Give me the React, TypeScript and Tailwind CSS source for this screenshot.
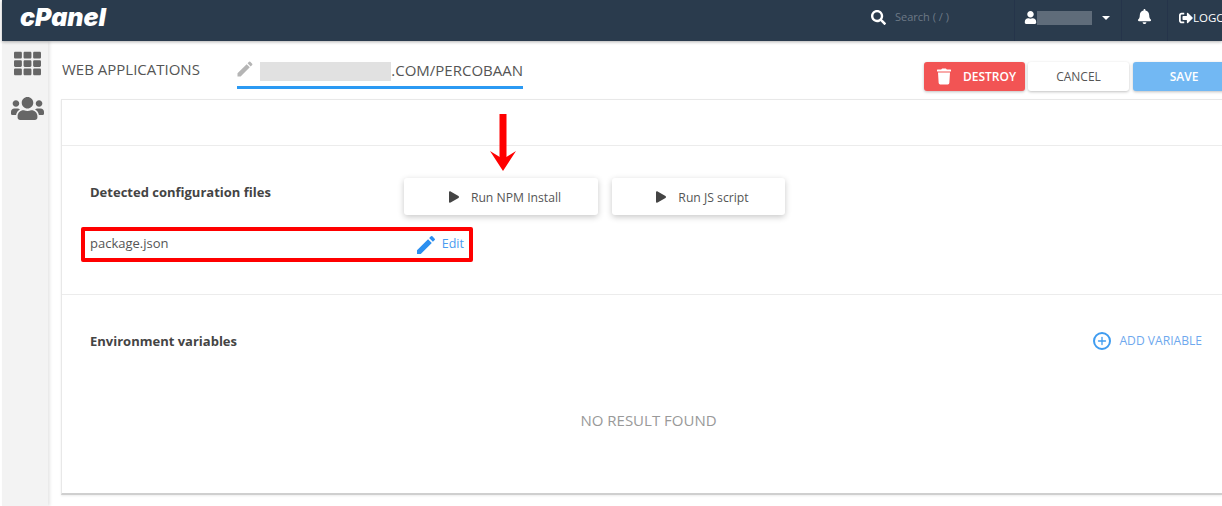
import { Plus } from 'lucide-react';
import { FaBell, FaPlay, FaSearch, FaSignOutAlt, FaTh, FaTrash, FaUser, FaUsers } from 'react-icons/fa';
import { MdEdit } from 'react-icons/md';

function RunButton({ label, width }: { label: string; width: string }) {
  return (
    <button className={`${width} h-[37px] flex items-center justify-center gap-[12px] pl-[8px] bg-white rounded-[3px] shadow-[0_2px_6px_rgba(0,0,0,0.22)] text-[12.2px] text-[#555]`}>
      <FaPlay className="w-[10px] h-[12px] text-[#444]" />
      <span className="pt-[3px]">{label}</span>
    </button>
  );
}

export default function App() {
  return (
    <div className="w-[1222px] h-[506px] overflow-hidden bg-white pl-[2px] font-['Open_Sans',sans-serif] text-[#555]">
      {/* Top bar */}
      <header className="relative z-10 h-[41px] bg-[#2a3b4d] flex items-center shadow-[0_1px_3px_rgba(0,0,0,0.3)]">
        <div className="ml-[18px] w-[90px] pb-[7px] text-[25px] leading-none font-black italic text-white font-['Inter',sans-serif]">cPanel</div>
        <div className="ml-auto w-[151px] flex items-center pl-[8px] pb-[6px]">
          <FaSearch className="w-[15px] h-[15px] text-white" />
          <span className="ml-[9px] text-[11px] text-[#6d7986]">Search ( / )</span>
        </div>
        <div className="w-[108px] h-full flex items-center border-x border-[#25344a] pl-[9px] pb-[6px]">
          <FaUser className="w-[13px] h-[13px] text-white" />
          <div className="w-[55px] h-[14px] bg-[#5f6c7a]" />
          <div className="ml-[10px] w-0 h-0 border-x-[4px] border-x-transparent border-t-[4px] border-t-white" />
        </div>
        <div className="w-[46px] h-full flex items-center justify-center border-r border-[#25344a] pb-[8px]">
          <FaBell className="w-[15px] h-[15px] text-white" />
        </div>
        <div className="w-[54px] flex items-center pl-[11px] pb-[6px] overflow-hidden text-[11.5px] text-white">
          <FaSignOutAlt className="w-[14px] h-[14px] shrink-0" />
          <span>LOGOUT</span>
        </div>
      </header>

      <div className="flex h-[465px]">
        {/* Sidebar */}
        <aside className="w-[46px] shrink-0 bg-[#f3f3f3] shadow-[2px_0_3px_rgba(0,0,0,0.1)] flex flex-col items-center pt-[9px] pl-[4px] gap-[18px] text-[#666]">
          <FaTh className="w-[27px] h-[27px]" />
          <FaUsers className="w-[33px] h-[27px]" />
        </aside>

        {/* Main */}
        <main className="flex-1 pl-[14px] min-w-0">
          <div className="h-[58px] flex items-start">
            <div className="mt-[18px] w-[175px] shrink-0 text-[15px] leading-[20px] text-[#555]">WEB APPLICATIONS</div>
            <div className="mt-[12px] w-[286px] shrink-0 h-[36px] border-b-[3px] border-[#2b9af3] flex items-start">
              <MdEdit className="mt-[6px] -ml-[2px] w-[20px] h-[20px] text-[#b5b5b5]" />
              <div className="ml-[5px] mt-[9px] w-[132px] h-[19px] bg-[#e1e1e1]" />
              <span className="mt-[7px] text-[15px] leading-[20px] text-[#555]">.COM/PERCOBAAN</span>
            </div>
            <div className="ml-[401px] mt-[21px] flex items-center shrink-0">
              <button className="w-[101px] h-[29px] flex items-center bg-[#f25454] rounded-[3px] shadow-[0_1px_3px_rgba(0,0,0,0.25)] text-[12px] font-semibold text-white pl-[13px]">
                <FaTrash className="w-[14px] h-[17px]" />
                <span className="ml-[12px]">DESTROY</span>
              </button>
              <button className="ml-[3px] w-[101px] h-[29px] bg-white rounded-[3px] shadow-[0_1px_3px_rgba(0,0,0,0.25)] text-[12px] text-[#555]">CANCEL</button>
              <button className="ml-[4px] w-[102px] h-[29px] bg-[#72b8f3] rounded-[3px] shadow-[0_1px_3px_rgba(0,0,0,0.25)] text-[12px] font-semibold text-white">SAVE</button>
            </div>
          </div>

          {/* Card */}
          <div className="h-[396px] -ml-[1px] border-l border-t border-[#e8e8e8] border-b-2 border-b-[#cfcfcf] shadow-[0_1px_2px_rgba(0,0,0,0.08)]">
            <div className="h-[46px] border-b border-[#ececec]" />

            <section className="relative h-[149px] border-b border-[#ececec] pl-[28px]">
              {/* Red annotation arrow */}
              <svg className="absolute left-[428px] top-[-32px]" width="26" height="58" viewBox="0 0 26 58">
                <rect x="9.5" y="0" width="7" height="46" fill="#ff0000" />
                <path d="M0 37 L13 57 L26 37 L13 45 Z" fill="#ff0000" />
              </svg>

              <div className="flex items-start pt-[32px]">
                <div className="w-[314px] pt-[4px] text-[13px] leading-[20px] font-bold text-[#444]">Detected configuration files</div>
                <div className="flex gap-[14px]">
                  <RunButton label="Run NPM Install" width="w-[194px]" />
                  <RunButton label="Run JS script" width="w-[173px]" />
                </div>
              </div>

              {/* Red annotation box */}
              <div className="absolute left-[19px] top-[81px] w-[392px] h-[35px] border-[4px] border-[#ff0000] rounded-[2px] flex items-center justify-between pl-[5px] pr-[5px]">
                <span className="pb-[2px] text-[13px] text-[#555]">package.json</span>
                <span className="flex items-center gap-[4px] text-[12.5px] text-[#4a9bf0]">
                  <MdEdit className="w-[24px] h-[24px] text-[#2b8ff0]" />
                  Edit
                </span>
              </div>
            </section>

            <section className="pl-[28px] pr-[20px]">
              <div className="flex items-center justify-between pt-[36px]">
                <span className="text-[13px] leading-[20px] font-bold text-[#444]">Environment variables</span>
                <span className="flex items-center gap-[8px] pt-[1px] text-[12.1px] text-[#6ea8ee]">
                  <span className="w-[18px] h-[18px] rounded-full border-2 border-[#3f9cf0] flex items-center justify-center">
                    <Plus className="w-[12px] h-[12px] text-[#3f9cf0]" strokeWidth={2.6} />
                  </span>
                  ADD VARIABLE
                </span>
              </div>
              <div className="mt-[59px] text-center text-[15px] leading-[20px] text-[#999] pl-[5px]">NO RESULT FOUND</div>
            </section>
          </div>
        </main>
      </div>
    </div>
  );
}
